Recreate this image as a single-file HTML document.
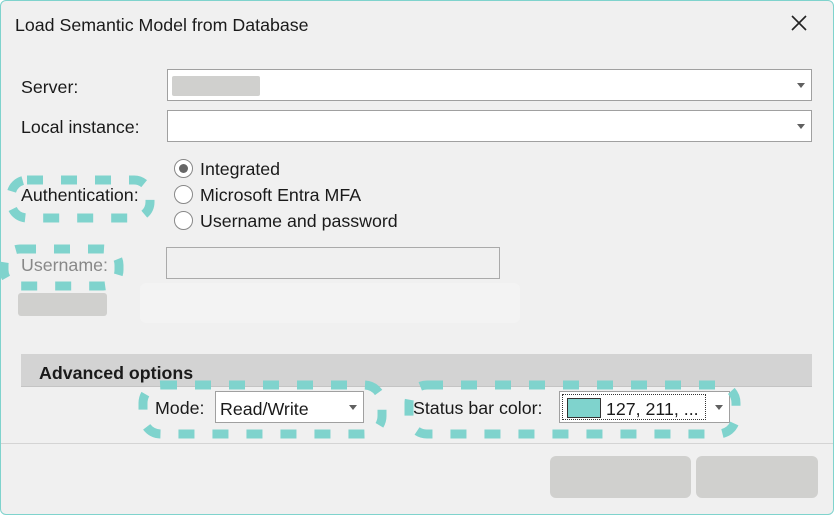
<!DOCTYPE html><html><head><style>
body{margin:0;width:834px;height:515px;background:#fff;font-family:"Liberation Sans",sans-serif;position:relative;overflow:hidden}
.dlg{position:absolute;left:0;top:0;width:832px;height:513px;border:1px solid #7fd3cd;border-radius:6px;background:#f0f0f0}
.a{position:absolute}
.t{position:absolute;font-size:17.8px;color:#1a1a1a;white-space:nowrap}
.cb{position:absolute;background:#fff;border:1px solid #a0a0a0;box-sizing:border-box}
.arr{position:absolute;right:6px;top:50%;margin-top:-2px;width:0;height:0;border-left:4px solid transparent;border-right:4px solid transparent;border-top:5px solid #606060}
.rad{position:absolute;width:19px;height:19px;border:1px solid #888;border-radius:50%;background:#fff;box-sizing:border-box}
</style></head><body>
<div class="dlg"></div>
<div class="t" style="left:15px;top:15px">Load Semantic Model from Database</div>
<svg class="a" style="left:790px;top:14px" width="18" height="18"><path d="M2 2L16 16M16 2L2 16" stroke="#222" stroke-width="1.6"/></svg>
<div class="t" style="left:21px;top:77px">Server:</div>
<div class="cb" style="left:167px;top:69px;width:645px;height:32px"><div class="a" style="left:4px;top:6px;width:88px;height:20px;background:#d0d0ce;border-radius:2px"></div><div class="arr"></div></div>
<div class="t" style="left:21px;top:117px">Local instance:</div>
<div class="cb" style="left:167px;top:110px;width:645px;height:32px"><div class="arr"></div></div>
<div class="rad" style="left:174px;top:159px"><div class="a" style="left:4px;top:4px;width:9px;height:9px;border-radius:50%;background:#666"></div></div>
<div class="t" style="left:200px;top:159px">Integrated</div>
<div class="rad" style="left:174px;top:185px"></div>
<div class="t" style="left:200px;top:185px">Microsoft Entra MFA</div>
<div class="rad" style="left:174px;top:211px"></div>
<div class="t" style="left:200px;top:211px">Username and password</div>
<div class="t" style="left:21px;top:185px">Authentication:</div>
<div class="t" style="left:21px;top:255px;color:#888">Username:</div>
<div class="cb" style="left:166px;top:247px;width:334px;height:32px;background:#f0f0f0;border-color:#aaa"></div>
<div class="a" style="left:140px;top:283px;width:380px;height:40px;background:#f3f3f3;border-radius:6px"></div>
<div class="a" style="left:18px;top:293px;width:89px;height:23px;background:#d0d0ce;border-radius:3px"></div>
<div class="a" style="left:21px;top:354px;width:791px;height:32px;background:#d3d3d3;border-bottom:1px solid #c4c4c4"></div>
<div class="t" style="left:39px;top:363px;font-weight:bold">Advanced options</div>
<div class="t" style="left:155px;top:398px">Mode:</div>
<div class="cb" style="left:215px;top:391px;width:149px;height:32px"><div class="t" style="left:4px;top:7px">Read/Write</div><div class="arr"></div></div>
<div class="t" style="left:413px;top:398px">Status bar color:</div>
<div class="cb" style="left:559px;top:391px;width:171px;height:32px"><div class="a" style="left:2px;top:2px;width:144px;height:26px;border:1px dotted #333;box-sizing:border-box"></div><div class="a" style="left:7px;top:6px;width:32px;height:18px;background:#7fd3cd;border:1px solid #333"></div><div class="t" style="left:46px;top:7px">127, 211, ...</div><div class="arr"></div></div>
<div class="a" style="left:1px;top:443px;width:832px;height:1px;background:#d4d4d4"></div>
<div class="a" style="left:550px;top:456px;width:141px;height:42px;background:#d0d0ce;border-radius:6px"></div>
<div class="a" style="left:696px;top:456px;width:122px;height:42px;background:#d0d0ce;border-radius:6px"></div>
<svg class="a" style="left:0;top:0" width="834" height="515"><g fill="none" stroke="#7fd3cd" stroke-width="9" stroke-dasharray="16 18">
<rect x="11" y="180" width="139" height="38" rx="16"/>
<rect x="4" y="249" width="115" height="37" rx="16"/>
<rect x="143" y="385" width="239" height="49" rx="18"/>
<rect x="409" y="385" width="327" height="49" rx="18"/>
</g></svg>
</body></html>
